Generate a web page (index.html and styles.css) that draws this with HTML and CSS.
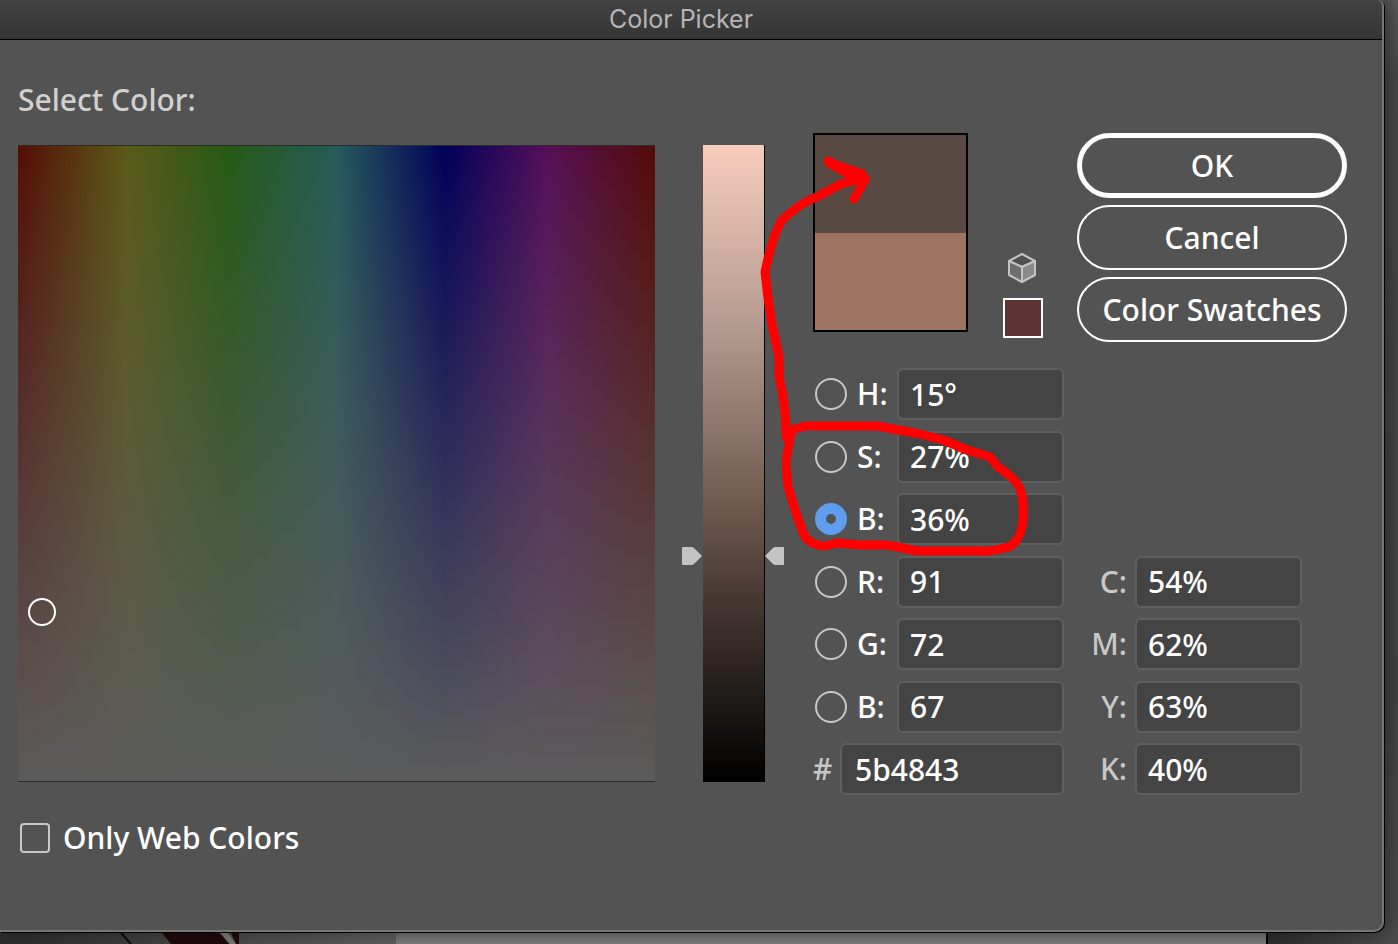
FILE: index.html
```
<!DOCTYPE html>
<html lang="en">
<head>
    <meta charset="utf-8">
    <title>Color Picker</title>
    <link rel="stylesheet" href="styles.css">
</head>
<body>
    <div class="dialog">
        <div class="titlebar">Color Picker</div>

        <form class="content">
            <div class="picker">
                <h1 class="heading">Select Color:</h1>

                <div class="picker-row">
                    <div class="field">
                        <span class="field-marker"></span>
                    </div>
                    <div class="slider">
                        <input type="range" class="slider-input" min="0" max="100" value="36" aria-label="Brightness">
                        <svg class="slider-handle" style="top: 63%" width="103" height="20" viewBox="0 0 103 20">
                            <path fill="#c4c4c4" d="M1 1h8q2 0 3 1l8 8-8 8q-1 1-3 1H1q-1 0-1-1V2q0-1 1-1z"/>
                            <path fill="#c4c4c4" d="M101 1h-7q-2 0-3 1l-8 8 8 8q1 1 3 1h7q1 0 1-1V2q0-1-1-1z"/>
                        </svg>
                    </div>
                </div>

                <label class="web-only">
                    <input type="checkbox" class="checkbox">
                    Only Web Colors
                </label>
            </div>

            <div class="panel">
                <div class="panel-top">
                    <div class="preview">
                        <div class="preview-new"></div>
                        <div class="preview-old"></div>
                    </div>

                    <div class="websafe">
                        <svg width="30" height="32" viewBox="0 0 30 32" stroke="#c4c4c4" stroke-width="2" stroke-linejoin="round">
                            <path fill="#505050" d="M14 2l13 7-13 6L1 9z"/>
                            <path fill="#6e6e6e" d="M1 9l13 6v15L1 23z"/>
                            <path fill="#8a8a8a" d="M27 9l-13 6v15l13-7z"/>
                        </svg>
                        <div class="websafe-color"></div>
                    </div>

                    <div class="buttons">
                        <button type="button" class="btn btn-primary">OK</button>
                        <button type="button" class="btn">Cancel</button>
                        <button type="button" class="btn">Color Swatches</button>
                    </div>
                </div>

                <div class="channels">
                    <div class="channel">
                        <input type="radio" class="radio" name="channel" id="r-h" aria-label="Hue">
                        <label for="h">H:</label>
                        <input type="text" class="value" id="h" value="15°">
                    </div>
                    <div class="channel">
                        <input type="radio" class="radio" name="channel" id="r-s" aria-label="Saturation">
                        <label for="s">S:</label>
                        <input type="text" class="value" id="s" value="27%">
                    </div>
                    <div class="channel">
                        <input type="radio" class="radio" name="channel" id="r-v" aria-label="Brightness" checked>
                        <label for="v">B:</label>
                        <input type="text" class="value" id="v" value="36%">
                    </div>
                    <div class="channel">
                        <input type="radio" class="radio" name="channel" id="r-r" aria-label="Red">
                        <label for="r">R:</label>
                        <input type="text" class="value" id="r" value="91">
                    </div>
                    <div class="channel cmyk">
                        <label for="c">C:</label>
                        <input type="text" class="value" id="c" value="54%">
                    </div>
                    <div class="channel">
                        <input type="radio" class="radio" name="channel" id="r-g" aria-label="Green">
                        <label for="g">G:</label>
                        <input type="text" class="value" id="g" value="72">
                    </div>
                    <div class="channel cmyk">
                        <label for="m">M:</label>
                        <input type="text" class="value" id="m" value="62%">
                    </div>
                    <div class="channel">
                        <input type="radio" class="radio" name="channel" id="r-b" aria-label="Blue">
                        <label for="b">B:</label>
                        <input type="text" class="value" id="b" value="67">
                    </div>
                    <div class="channel cmyk">
                        <label for="y">Y:</label>
                        <input type="text" class="value" id="y" value="63%">
                    </div>
                    <div class="channel hex">
                        <label for="hex">#</label>
                        <input type="text" class="value" id="hex" value="5b4843">
                    </div>
                    <div class="channel cmyk">
                        <label for="k">K:</label>
                        <input type="text" class="value" id="k" value="40%">
                    </div>
                </div>

                <!-- hand-drawn note: S and B drive the new color -->
                <svg class="note" width="290" height="430" viewBox="750 140 290 430">
                    <path d="M865 178L841 184L817 197Q803 201 782 220Q773 234 765 272L768 298L772 325L779 357L779 377Q786 405 786 437"/>
                    <path d="M828 161L839 166L862 174L865 180L854 199M829 163L850 175L864 178"/>
                    <path d="M787 438L791 430L805 426H877L920 434L943 440L967 450L990 457L998 467Q1017 480 1020 489Q1024 500 1023 520Q1020 546 1004 548Q990 552 980 551H917L887 545H860L837 543L825 546Q808 545 803 533L795 510L788 487Q785 460 787 455L791 433"/>
                </svg>
            </div>
        </form>
    </div>

    <!-- artwork window showing below the dialog -->
    <div class="backdrop">
        <svg width="396" height="11" viewBox="0 0 396 11">
            <defs>
                <linearGradient id="shade">
                    <stop offset="0" stop-color="#2b2b2b"/>
                    <stop offset="0.4" stop-color="#404040"/>
                    <stop offset="1" stop-color="#5c5c5c"/>
                </linearGradient>
            </defs>
            <path fill="url(#shade)" d="M0 0h396v11H0z"/>
            <path stroke="#0c0c0c" stroke-width="2" d="M121 0l10 11"/>
            <path fill="#1f080d" d="M162 0h58l9 11h-58z"/>
            <path fill="#777" d="M220 0h8l8 11h-6z"/>
            <path fill="#24090e" d="M231 0h8v11h-3z"/>
        </svg>
        <div class="backdrop-page"></div>
        <div class="backdrop-edge"></div>
    </div>
</body>
</html>
```

FILE: styles.css
```
* {
    margin: 0;
    padding: 0;
    box-sizing: border-box;
}

body {
    background: linear-gradient(#575757, #464646 80px, #434343 700px, #4a4a4a);
    font-family: 'Noto Sans', 'Open Sans', sans-serif;
    font-size: 30px;
    font-weight: 500;
    line-height: 40px;
    color: #fff;
}

.dialog {
    margin-right: 14px;
    background: #535353;
    border: solid #777;
    border-width: 0 2px 2px 0;
    border-radius: 0 6px 10px 0;
    box-shadow: 1px 1px 0 #000, 4px 0 16px rgba(0, 0, 0, 0.4);
    position: relative;
}

.titlebar {
    height: 40px;
    padding-right: 20px;
    background: linear-gradient(#424242, #353535);
    border-bottom: 1px solid #000;
    border-radius: 0 6px 0 0;
    color: #b6b6b6;
    font-family: Inter, Roboto, sans-serif;
    font-size: 25px;
    font-weight: 400;
    line-height: 38px;
    text-align: center;
}

.content {
    display: grid;
    grid-template-columns: minmax(0, 1fr) 534px;
    align-items: start;
    gap: 28px;
    padding: 40px 35px 72px 18px;
}

.heading {
    margin-bottom: 25px;
    color: #d0d0d0;
    font-size: 30px;
    font-weight: 500;
}

.picker-row {
    display: grid;
    grid-template-columns: minmax(0, 1fr) 103px;
    gap: 27px;
}

.field {
    align-self: start;
    aspect-ratio: 1;
    position: relative;
    border: solid #2a2a2a;
    border-width: 1px 0;
    background:
        linear-gradient(rgba(91, 91, 91, 0), #5b5b5b),
        linear-gradient(to right, #540d06, #5c5a17 17%, #255a14 33%, #265b5b 50%, #00005a 67%, #560f5a 83%, #540b06);
}

.field-marker {
    position: absolute;
    left: 4%;
    top: 73.5%;
    width: 28px;
    height: 28px;
    margin: -15px 0 0 -15px;
    border: 2px solid #fff;
    border-radius: 50%;
}

.slider {
    position: relative;
}

/* fills the slider, between its two handles */
.slider-input {
    appearance: none;
    position: absolute;
    left: 21px;
    top: 0;
    width: 62px;
    height: 100%;
    writing-mode: vertical-lr;
    direction: rtl;
    border-right: 1px solid #000;
    background: linear-gradient(#f7ccbc, #b69b90 28%, #685449 59%, #483833 71%, #1f1b18 87%, #000);
}

.slider-input::-webkit-slider-thumb {
    appearance: none;
    width: 62px;
    height: 20px;
    background: transparent;
}

.slider-handle {
    position: absolute;
    left: 0;
    pointer-events: none;
}

.web-only {
    display: flex;
    align-items: center;
    gap: 13px;
    margin-top: 36px;
    padding-left: 2px;
}

.checkbox {
    appearance: none;
    width: 30px;
    height: 30px;
    border: 2px solid #c8c8c8;
    border-radius: 4px;
}

.panel {
    position: relative;
    padding-top: 53px;
}

.panel-top {
    display: flex;
    justify-content: space-between;
    align-items: flex-start;
}

.preview {
    width: 155px;
    height: 199px;
    border: 2px solid #000;
    display: flex;
    flex-direction: column;
}

.preview-new,
.preview-old {
    flex: 1;
}

.preview-new {
    background: #584943;
}

.preview-old {
    background: #9d7361;
}

.websafe {
    display: flex;
    flex-direction: column;
    align-items: center;
    gap: 14px;
    padding-top: 119px;
}

.websafe-color {
    width: 40px;
    height: 40px;
    background: #5d3432;
    border: 2px solid #fff;
}

.buttons {
    display: flex;
    flex-direction: column;
    gap: 7px;
    width: 270px;
}

.btn {
    height: 65px;
    background: none;
    border: 2px solid #fff;
    border-radius: 33px;
    color: #fff;
    font: inherit;
}

.btn-primary {
    border-width: 5px;
}

.channels {
    display: grid;
    grid-template-columns: 251px 238px;
    grid-auto-rows: 52px;
    align-content: space-between;
    height: 427px;
    margin-top: 26px;
}

.channel {
    grid-column: 1;
    display: flex;
    align-items: center;
    padding-left: 2px;
}

.channel label {
    flex: 1;
    padding-left: 10px;
}

.radio {
    appearance: none;
    width: 32px;
    height: 32px;
    border: 2px solid #c8c8c8;
    border-radius: 50%;
}

.radio:checked {
    border: 11px solid #5f9eee;
}

.value {
    width: 167px;
    height: 52px;
    padding-left: 11px;
    background: #444;
    border: 2px solid #5f5f5f;
    border-radius: 6px;
    color: #fff;
    font: inherit;
}

.cmyk {
    grid-column: 2;
}

.cmyk label {
    padding-right: 8px;
    color: #c8c8c8;
    text-align: right;
}

.hex {
    padding-left: 0;
}

.hex label {
    padding-left: 0;
    color: #c8c8c8;
}

.hex .value {
    width: 224px;
    padding-left: 13px;
}

.note {
    position: absolute;
    left: -63px;
    top: 60px;
    fill: none;
    stroke: #fe0000;
    stroke-width: 9px;
    stroke-linecap: round;
    stroke-linejoin: round;
    pointer-events: none;
}

.backdrop {
    display: flex;
    height: 11px;
    margin-top: 1px;
}

.backdrop-page {
    flex: 1;
    background: linear-gradient(#6c6c6c, #7b7b7b);
    border-right: 2px solid #000;
}

.backdrop-edge {
    width: 130px;
    background: linear-gradient(to right, #2c2c2c, #4a4a4a);
}
```
